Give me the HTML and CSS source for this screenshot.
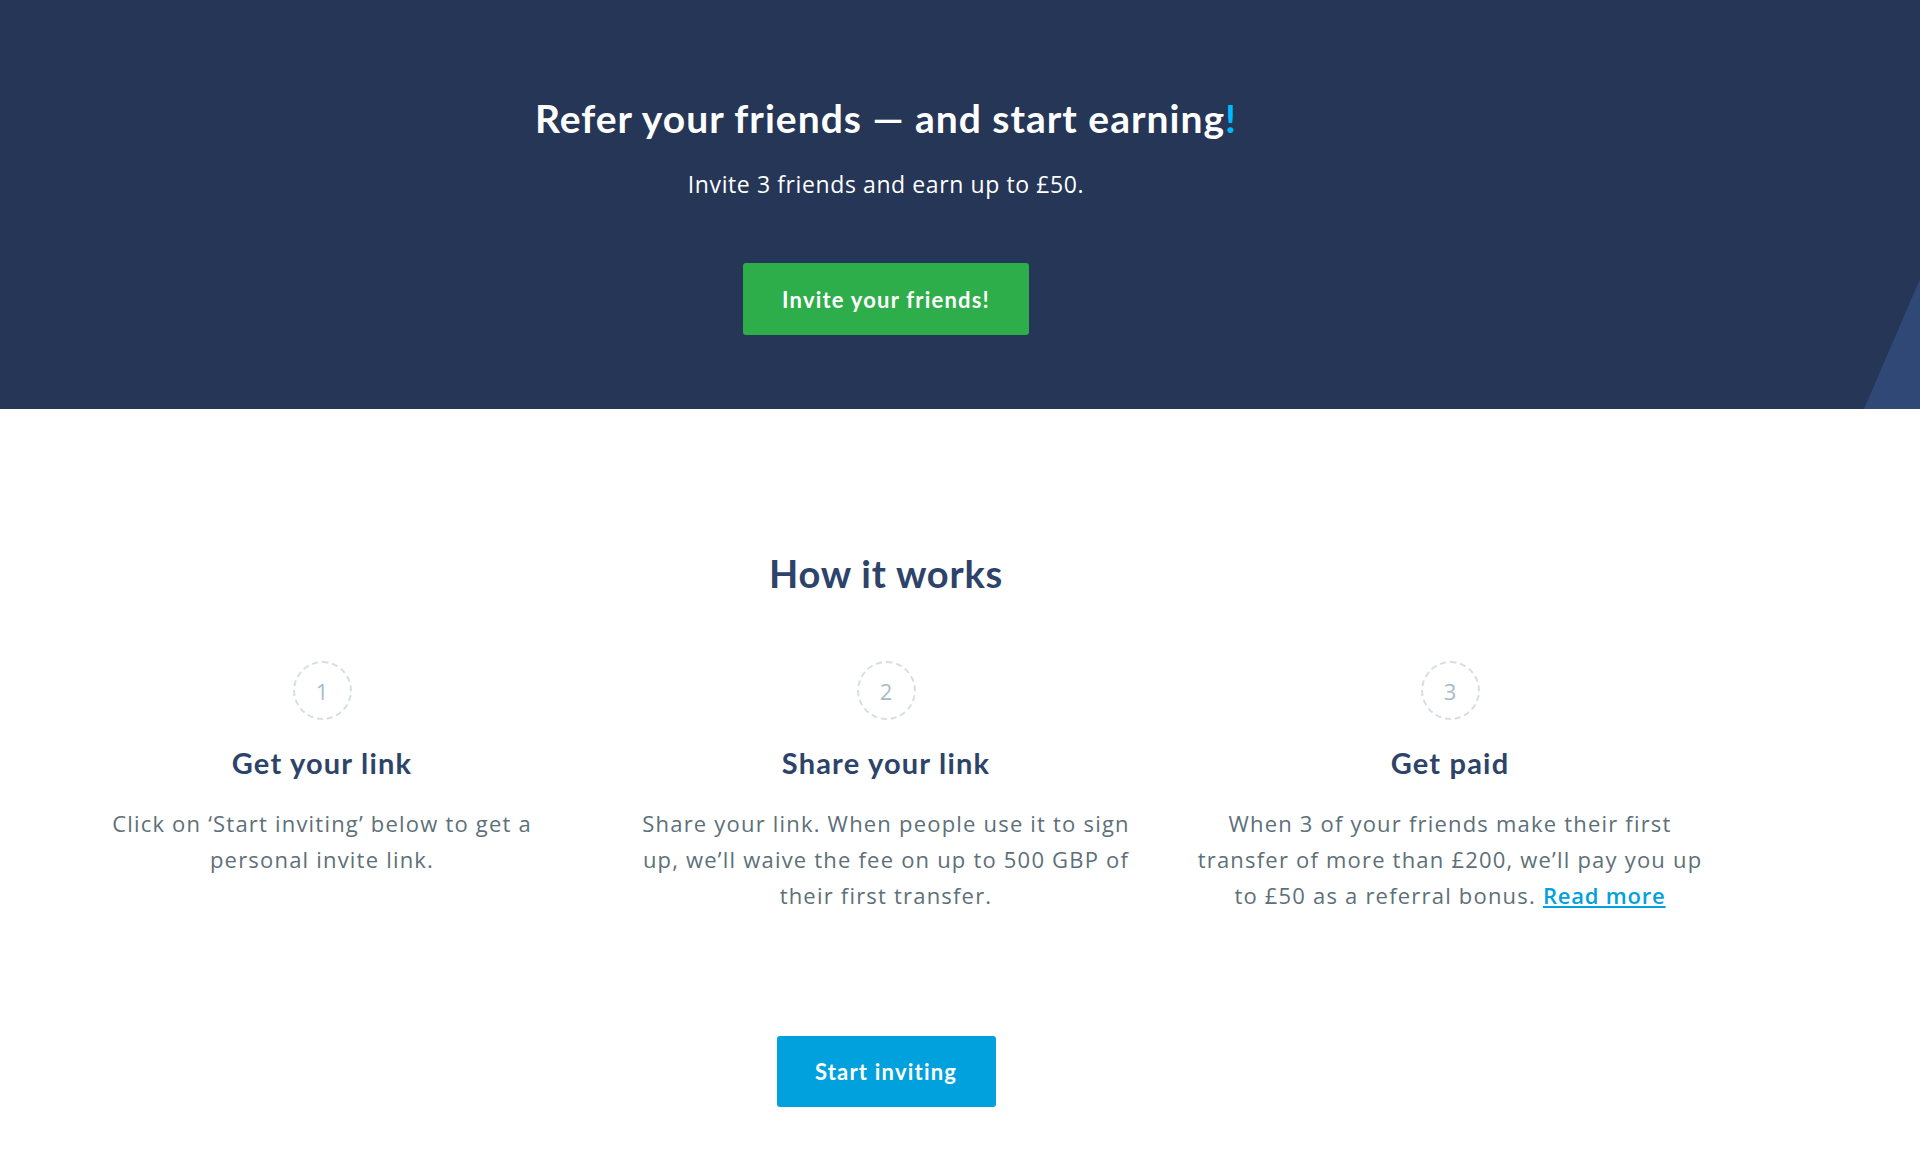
FILE: index.html
```html
<!DOCTYPE html>
<html lang="en">
<head>
	<meta charset="UTF-8">
	<title>Refer your friends</title>
	<link rel="stylesheet" href="styles.css">
</head>
<body>

	<!-- HERO --------------------------------- -->
	<header class="hero">
		<div class="wrap hero-inner">
			<h1>Refer your friends — and start earning<span class="accent">!</span></h1>
			<p class="hero-sub">Invite 3 friends and earn up to £50.</p>
			<a class="btn btn-green" href="#">Invite your friends!</a>
		</div>
		<svg class="hero-shape" width="60" height="130" viewBox="0 0 60 130" preserveAspectRatio="none">
			<polygon points="60,0 60,130 4,130" fill="#2f4876" />
		</svg>
	</header>

	<!-- HOW IT WORKS --------------------------------- -->
	<main class="wrap how">
		<h2>How it works</h2>
		<div class="steps">
			<div class="step">
				<span class="step-num">1</span>
				<h3>Get your link</h3>
				<p>Click on ‘Start inviting’ below to get a personal invite link.</p>
			</div>
			<div class="step">
				<span class="step-num">2</span>
				<h3>Share your link</h3>
				<p>Share your link. When people use it to sign up, we’ll waive the fee on up to 500 GBP of their first transfer.</p>
			</div>
			<div class="step">
				<span class="step-num">3</span>
				<h3>Get paid</h3>
				<p>When 3 of your friends make their first transfer of more than £200, we’ll pay you up to £50 as a referral bonus. <a href="#">Read more</a></p>
			</div>
		</div>
		<a class="btn btn-blue" href="#">Start inviting</a>
	</main>

</body>
</html>
```

FILE: styles.css
```css
/* GENERAL --------------------------------- */
* {
	box-sizing: border-box;
}
html,
body {
	margin: 0;
	padding: 0;
}
body {
	font-family: 'Open Sans', Lato, sans-serif;
	color: #5d7079;
	background: #fff;
}
h1,
h2,
h3,
p {
	margin: 0;
}
h1,
h2,
h3,
.btn {
	font-family: Lato, 'Open Sans', sans-serif;
}
.wrap {
	width: 1692px;
	margin-left: 40px;
	display: flex;
	flex-direction: column;
	align-items: center;
	text-align: center;
}

/* BUTTONS --------------------------------- */
.btn {
	display: inline-flex;
	align-items: center;
	justify-content: center;
	height: 72px;
	border-radius: 3px;
	color: #fff;
	font-size: 22px;
	font-weight: 700;
	letter-spacing: 1.2px;
	text-decoration: none;
}
.btn-green {
	width: 286px;
	background-color: #2ead4b;
}
.btn-blue {
	width: 219px;
	height: 71px;
	background-color: #00a1dd;
}

/* HERO --------------------------------- */
.hero {
	position: relative;
	height: 409px;
	background-color: #253657;
	overflow: hidden;
}
.hero-inner {
	padding-top: 92px;
}
.hero h1 {
	color: #fff;
	font-size: 39px;
	font-weight: 700;
	line-height: 52px;
	letter-spacing: 1px;
}
.hero h1 .accent {
	color: #00b9ff;
}
.hero-sub {
	margin-top: 24px;
	color: #fff;
	font-size: 23px;
	line-height: 32px;
	letter-spacing: 0.6px;
}
.hero .btn-green {
	margin-top: 63px;
}
.hero-shape {
	position: absolute;
	right: 0;
	bottom: 0;
}

/* HOW IT WORKS --------------------------------- */
.how {
	padding-top: 138px;
	padding-bottom: 62px;
}
.how h2 {
	color: #2e4369;
	font-size: 38px;
	font-weight: 700;
	line-height: 52px;
	letter-spacing: 0.8px;
}
.steps {
	display: grid;
	grid-template-columns: repeat(3, 1fr);
	width: 100%;
	margin-top: 62px;
	margin-bottom: 123px;
}
.step {
	display: flex;
	flex-direction: column;
	align-items: center;
	padding: 0 24px;
}
.step-num {
	display: flex;
	align-items: center;
	justify-content: center;
	width: 59px;
	height: 59px;
	border: 2px dashed #d6dee3;
	border-radius: 50%;
	color: #a7bcc9;
	font-size: 22px;
	font-weight: 400;
}
.step h3 {
	margin-top: 24px;
	color: #2e4369;
	font-size: 29px;
	font-weight: 700;
	line-height: 38px;
	letter-spacing: 1.2px;
}
.step p {
	margin-top: 23px;
	max-width: 516px;
	font-size: 22px;
	line-height: 36px;
	letter-spacing: 1.2px;
}
.step p a {
	color: #00a1dd;
	font-weight: 600;
	letter-spacing: 0.8px;
	text-decoration: underline;
}
```
